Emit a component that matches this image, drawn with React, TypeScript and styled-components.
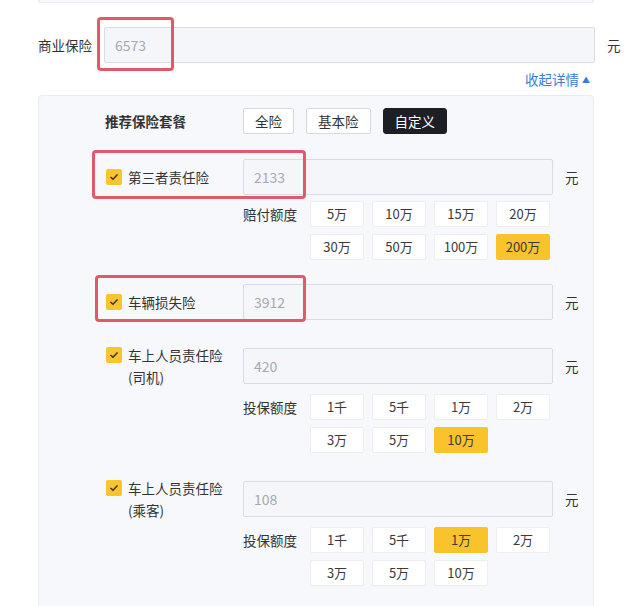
import styled, { createGlobalStyle } from "styled-components";

const GlobalStyle = createGlobalStyle`
  body {
    margin: 0;
    background: #fff;
    font-family: "Noto Sans CJK SC", "Noto Sans", sans-serif;
    color: #333;
  }
`;

const Page = styled.div({
  paddingLeft: '38px',
  width: '602px',
  height: '606px',
  overflow: 'hidden',
  fontSize: '13.5px',
});

const TopCard = styled.div({
  width: '556px',
  height: '3px',
  boxSizing: 'border-box',
  border: '1px solid #e6e9ef',
  borderTop: 'none',
  borderRadius: '0 0 4px 4px',
  background: '#f8f9fc',
});

const FieldRow = styled.div({
  marginTop: '24px',
  display: 'flex',
  alignItems: 'center',
  height: '36px',
});

const FieldLabel = styled.span({
  width: '54px',
  marginRight: '12px',
  whiteSpace: 'nowrap',
});

const InputWrap = styled.div({
  position: 'relative',
});

const Input = styled.div<{ $w: number }>(({ $w }) => ({
  width: `${$w}px`,
  height: '36px',
  boxSizing: 'border-box',
  border: '1px solid #d9dce3',
  borderRadius: '2px',
  background: '#f5f6f9',
  color: '#a6a9b0',
  padding: '0 10px',
  fontSize: '14px',
  lineHeight: '34px',
}));

const Unit = styled.span({
  marginLeft: '12px',
});

const Toggle = styled.div({
  width: '556px',
  height: '20px',
  marginTop: '6px',
  display: 'flex',
  justifyContent: 'flex-end',
  alignItems: 'center',
  color: '#3a7bd8',
  paddingRight: '4px',
  boxSizing: 'border-box',
  '.toggle-arrow': {
    fontSize: '8px',
    marginLeft: '3px',
  },
});

const Panel = styled.div({
  marginTop: '6px',
  width: '556px',
  height: '530px',
  boxSizing: 'border-box',
  border: '1px solid #e8ebf0',
  borderRadius: '4px',
  background: '#f7f8fb',
  padding: '12px 0 0 67px',
});

const PresetRow = styled.div({
  display: 'flex',
  alignItems: 'center',
  height: '26px',
});

const PresetTitle = styled.span({
  width: '137px',
  fontWeight: 700,
  marginLeft: '-1px',
});

const PresetButtons = styled.div({
  display: 'flex',
  gap: '12px',
  marginLeft: '1px',
});

const PresetButton = styled.button<{ $active?: boolean }>(({ $active }) => ({
  height: '26px',
  padding: '0 11px',
  border: `1px solid ${$active ? '#1e1f25' : '#d6d9df'}`,
  borderRadius: $active ? '3px' : '2px',
  background: $active ? '#1e1f25' : '#fff',
  color: $active ? '#fff' : '#333',
  font: 'inherit',
  lineHeight: '24px',
  cursor: 'pointer',
}));

const Item = styled.div<{ $first?: boolean }>(({ $first }) => ({
  marginTop: $first ? '25px' : '24px',
}));

const ItemRow = styled.div({
  position: 'relative',
  display: 'flex',
  alignItems: 'center',
  minHeight: '36px',
});

const ItemLabel = styled.div({
  width: '137px',
  display: 'flex',
  alignItems: 'flex-start',
  lineHeight: '22px',
});

const Check = styled.span({
  flex: 'none',
  width: '16px',
  height: '16px',
  marginTop: '3px',
  marginRight: '6px',
  borderRadius: '2px',
  background: '#f8c52f',
  display: 'flex',
  alignItems: 'center',
  justifyContent: 'center',
});

const ItemName = styled.div({
  '.item-sub': {
    display: 'block',
  },
});

const Options = styled.div({
  marginTop: '6px',
  marginLeft: '137px',
  display: 'flex',
  alignItems: 'flex-start',
});

const OptionsLabel = styled.span({
  width: '54px',
  marginRight: '13px',
  lineHeight: '26px',
  whiteSpace: 'nowrap',
});

const OptionsGrid = styled.div({
  display: 'grid',
  gridTemplateColumns: 'repeat(4, 54px)',
  columnGap: '8px',
  rowGap: '7px',
});

const Option = styled.button<{ $active?: boolean }>(({ $active }) => ({
  height: '26px',
  padding: 0,
  border: `1px solid ${$active ? '#f9c32c' : '#eceef2'}`,
  borderRadius: '2px',
  background: $active ? '#f9c32c' : '#fff',
  color: '#3a3a3a',
  font: 'inherit',
  fontSize: '13px',
  lineHeight: '24px',
  cursor: 'pointer',
}));

const Highlight = styled.div<{ $l: number; $t: number; $w: number; $h: number }>(({ $l, $t, $w, $h }) => ({
  position: 'absolute',
  left: `${$l}px`,
  top: `${$t}px`,
  width: `${$w}px`,
  height: `${$h}px`,
  boxSizing: 'border-box',
  border: '3px solid #e2596b',
  borderRadius: '4px',
  pointerEvents: 'none',
}));

const CheckMark = () => (
  <svg width="10" height="8" viewBox="0 0 10 8">
    <polyline points="1.5,4 4,6.3 8.5,1.5" fill="none" stroke="#3b3221" strokeWidth="1.5" />
  </svg>
);

type Coverage = {
  name: string;
  sub?: string;
  value: string;
  optionsLabel?: string;
  options?: string[];
  selected?: string;
  mark?: { l: number; t: number; w: number; h: number };
};

const coverages: Coverage[] = [
  {
    name: '第三者责任险',
    value: '2133',
    optionsLabel: '赔付额度',
    options: ['5万', '10万', '15万', '20万', '30万', '50万', '100万', '200万'],
    selected: '200万',
    mark: { l: -14, t: -9, w: 214, h: 49 },
  },
  {
    name: '车辆损失险',
    value: '3912',
    mark: { l: -11, t: -9, w: 211, h: 47 },
  },
  {
    name: '车上人员责任险',
    sub: '(司机)',
    value: '420',
    optionsLabel: '投保额度',
    options: ['1千', '5千', '1万', '2万', '3万', '5万', '10万'],
    selected: '10万',
  },
  {
    name: '车上人员责任险',
    sub: '(乘客)',
    value: '108',
    optionsLabel: '投保额度',
    options: ['1千', '5千', '1万', '2万', '3万', '5万', '10万'],
    selected: '1万',
  },
];

const App = () => {
  return (
    <Page>
      <GlobalStyle />
      <TopCard />
      <FieldRow>
        <FieldLabel>商业保险</FieldLabel>
        <InputWrap>
          <Input $w={491}>6573</Input>
          <Highlight $l={-7} $t={-10} $w={77} $h={54} />
        </InputWrap>
        <Unit>元</Unit>
      </FieldRow>
      <Toggle>
        收起详情<span className="toggle-arrow">▲</span>
      </Toggle>
      <Panel>
        <PresetRow>
          <PresetTitle>推荐保险套餐</PresetTitle>
          <PresetButtons>
            <PresetButton>全险</PresetButton>
            <PresetButton>基本险</PresetButton>
            <PresetButton $active>自定义</PresetButton>
          </PresetButtons>
        </PresetRow>
        {coverages.map((item, index) => (
          <Item key={index} $first={index === 0}>
            <ItemRow>
              <ItemLabel>
                <Check><CheckMark /></Check>
                <ItemName>
                  {item.name}
                  {item.sub && <span className="item-sub">{item.sub}</span>}
                </ItemName>
              </ItemLabel>
              <Input $w={310}>{item.value}</Input>
              <Unit>元</Unit>
              {item.mark && (
                <Highlight $l={item.mark.l} $t={item.mark.t} $w={item.mark.w} $h={item.mark.h} />
              )}
            </ItemRow>
            {item.options && (
              <Options>
                <OptionsLabel>{item.optionsLabel}</OptionsLabel>
                <OptionsGrid>
                  {item.options.map((opt) => (
                    <Option key={opt} $active={opt === item.selected}>{opt}</Option>
                  ))}
                </OptionsGrid>
              </Options>
            )}
          </Item>
        ))}
      </Panel>
    </Page>
  );
};

export default App;
